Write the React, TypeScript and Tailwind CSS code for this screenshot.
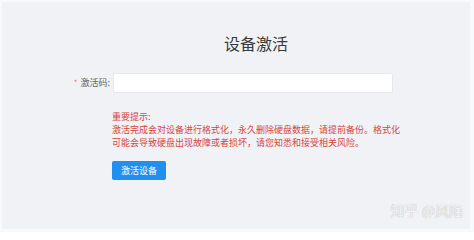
import React from "react";

export default function App() {
  const font = { fontFamily: '"Noto Sans CJK SC", "Noto Sans", sans-serif' };
  return (
    <div
      className="relative w-[474px] h-[232px] bg-[#f8f9fb] pt-[2px] pl-[2px] pr-[4px] pb-[3px] overflow-hidden"
      style={font}
    >
      <div className="w-full h-full bg-[#f0f2f5] flex flex-col pt-[31px]">
        <div className="ml-[222px] text-[16px] leading-[20px] text-[#3a3a3a]">设备激活</div>

        <div className="mt-[20px] flex items-center h-[20px]">
          <div className="w-[111px] pr-[3px] flex justify-end items-center text-[9px] leading-[12px] text-[#606266]">
            <span className="text-[#f56c6c] mr-[3px] text-[8px]">*</span>
            <span>激活码:</span>
          </div>
          <div className="w-[280px] h-[20px] bg-white border border-[#e6e8ec] rounded-[2px]" />
        </div>

        <div className="mt-[17px] ml-[110px] text-[9px] leading-[13px] text-[#d6443f] whitespace-nowrap">
          重要提示:
          <br />
          激活完成会对设备进行格式化，永久删除硬盘数据，请提前备份。格式化
          <br />
          可能会导致硬盘出现故障或者损坏，请您知悉和接受相关风险。
        </div>

        <div className="mt-[12px] ml-[110px]">
          <button className="w-[54px] h-[19px] bg-[#1f8ff0] rounded-[2px] text-white text-[9px] leading-[19px] flex items-center justify-center">
            激活设备
          </button>
        </div>
      </div>

      <div className="absolute right-[11px] top-[201px] text-[14px] leading-[18px] text-[#f2f2f2] [text-shadow:0_0_1px_#a8a8a8] whitespace-nowrap">
        知乎 @风陌
      </div>
    </div>
  );
}
